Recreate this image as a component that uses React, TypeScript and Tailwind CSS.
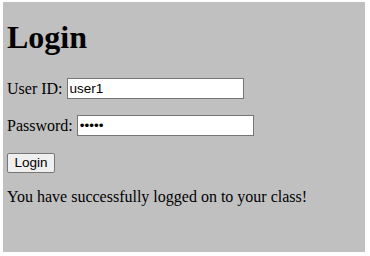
import React from "react";

export default function App() {
  return (
    <div className="w-[370px] h-[256px] bg-white pt-[2px] pl-[3px] pr-[5px] pb-[4px]">
      <div className="h-full bg-[#c0c0c0] px-[4px] pt-[17px] text-black" style={{ fontFamily: '"Liberation Serif", serif' }}>
        <h1 className="text-[32px] font-bold leading-[37px]">Login</h1>
        <div className="mt-[22px] flex items-center h-[21px] text-[16px]">
          <span>User ID:&nbsp;</span>
          <input
            readOnly
            defaultValue="user1"
            className="h-[21px] w-[177px] border border-[#767676] bg-white px-[2px] text-[13.5px] text-black outline-none"
            style={{ fontFamily: '"Liberation Sans", Arial, sans-serif' }}
          />
        </div>
        <div className="mt-[16px] flex items-center h-[21px] text-[16px]">
          <span>Password:&nbsp;</span>
          <input
            readOnly
            type="password"
            defaultValue="abcde"
            className="h-[21px] w-[177px] border border-[#767676] bg-white px-[2px] text-[13.5px] text-black outline-none"
            style={{ fontFamily: '"Liberation Sans", Arial, sans-serif' }}
          />
        </div>
        <div className="mt-[17px] flex">
          <button
            className="h-[20px] w-[48px] border border-[#767676] rounded-[2px] bg-[#efefef] text-[13.5px] leading-[16px] text-black"
            style={{ fontFamily: '"Liberation Sans", Arial, sans-serif' }}
          >
            Login
          </button>
        </div>
        <p className="mt-[15px] text-[16px] leading-[18.4px]">You have successfully logged on to your class!</p>
      </div>
    </div>
  );
}
